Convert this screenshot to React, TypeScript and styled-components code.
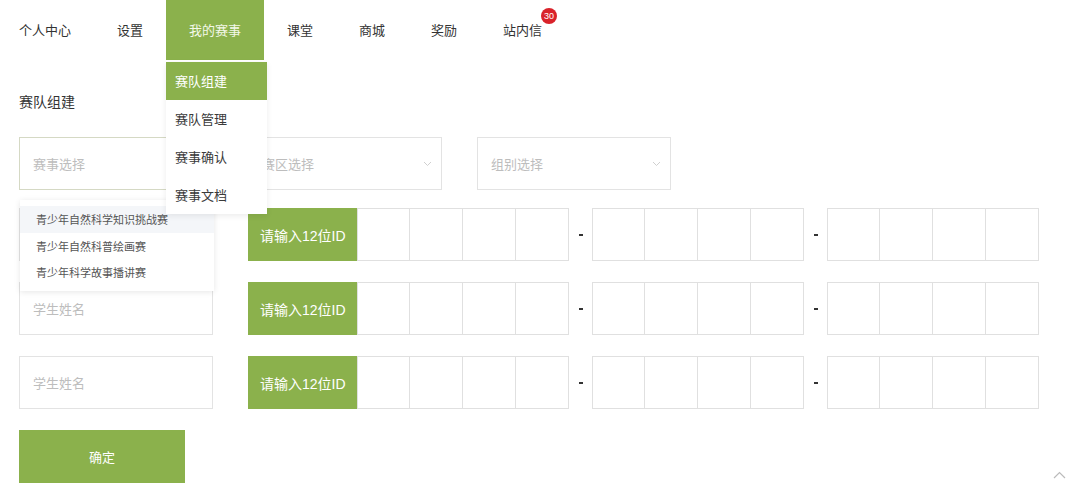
import React from "react";
import styled, { createGlobalStyle } from "styled-components";

const green = "#8bb14c";

const GlobalStyle = createGlobalStyle`
    html, body {
        margin: 0;
        padding: 0;
        background: #fff;
    }
    body {
        font-family: "Noto Sans CJK SC", "Noto Sans", sans-serif;
        color: #333;
    }
`;

const Page = styled.div`
    position: relative;
    width: 1080px;
    height: 501px;
    overflow: hidden;
`;

// Top navigation
const NavBar = styled.nav`
    display: flex;
    height: 60px;
`;

const NavItem = styled.div<{ $active?: boolean }>`
    position: relative;
    padding: 0 23px;
    line-height: 60px;
    font-size: 13px;
    white-space: nowrap;
    color: ${(p) => (p.$active ? "#f3f8e8" : "#333")};
    background: ${(p) => (p.$active ? green : "transparent")};

    &:first-child {
        padding-left: 19px;
    }
`;

const Badge = styled.span`
    position: absolute;
    right: 8px;
    top: 8px;
    width: 16px;
    height: 16px;
    border-radius: 50%;
    background: #d9222a;
    color: #fff;
    font-family: "Liberation Sans", sans-serif;
    font-size: 9px;
    line-height: 16px;
    text-align: center;
`;

const SubMenu = styled.div`
    position: absolute;
    top: 62px;
    left: 0;
    width: 101px;
    background: #fff;
    box-shadow: 0 2px 6px rgba(0, 0, 0, 0.08);
    z-index: 10;
`;

const SubItem = styled.div<{ $active?: boolean }>`
    height: 38px;
    line-height: 38px;
    padding-left: 9px;
    font-size: 13px;
    color: ${(p) => (p.$active ? "#fff" : "#3a3a3a")};
    background: ${(p) => (p.$active ? green : "transparent")};
`;

// Main content
const Main = styled.main`
    padding-left: 19px;
`;

const Title = styled.h2`
    margin: 32px 0 0;
    font-size: 14px;
    font-weight: normal;
    line-height: 18px;
    color: #333;
`;

const SelectRow = styled.div`
    display: flex;
    gap: 35px;
    margin-top: 27px;
`;

const SelectBox = styled.div<{ $focused?: boolean }>`
    position: relative;
    box-sizing: border-box;
    width: 194px;
    height: 53px;
    display: flex;
    align-items: center;
    justify-content: space-between;
    padding: 0 9px 0 13px;
    border: 1px solid ${(p) => (p.$focused ? "#d5d9c4" : "#e3e3e3")};
    font-size: 13px;
    color: #bdbdbd;
`;

const Chevron = styled.svg`
    width: 9px;
    height: 6px;
`;

const OptionsPanel = styled.div`
    position: absolute;
    top: 62px;
    left: 0;
    width: 194px;
    padding: 6px 0 5px;
    background: #fff;
    box-shadow: 0 1px 6px rgba(0, 0, 0, 0.1);
    z-index: 5;
`;

const OptionItem = styled.div<{ $hover?: boolean }>`
    height: 26.5px;
    line-height: 26.5px;
    padding-left: 16px;
    font-size: 11px;
    color: #555;
    background: ${(p) => (p.$hover ? "#f4f6f9" : "transparent")};
`;

const Rows = styled.div`
    display: flex;
    flex-direction: column;
    gap: 21px;
    margin-top: 18px;
`;

const Row = styled.div`
    display: flex;
    align-items: stretch;
    height: 53px;
`;

const NameInput = styled.div`
    box-sizing: border-box;
    width: 194px;
    margin-right: 35px;
    display: flex;
    align-items: center;
    padding-left: 13px;
    border: 1px solid #e3e3e3;
    font-size: 13px;
    color: #bdbdbd;
`;

const IdLabel = styled.div`
    width: 109px;
    display: flex;
    align-items: center;
    padding-left: 12px;
    box-sizing: border-box;
    background: ${green};
    color: #fff;
    font-family: "Liberation Sans", "Noto Sans CJK SC", sans-serif;
    font-size: 14px;
`;

const CellGroup = styled.div`
    display: flex;
`;

const Cell = styled.div`
    box-sizing: border-box;
    width: 53px;
    border: 1px solid #e0e0e0;

    & + & {
        margin-left: -1px;
        width: 54px;
    }
`;

const Dash = styled.div`
    width: 23px;
    display: flex;
    align-items: center;
    justify-content: center;

    &::before {
        content: "";
        width: 4px;
        height: 2px;
        background: #333;
    }
`;

const ConfirmButton = styled.button`
    display: block;
    margin-top: 21px;
    width: 166px;
    height: 53px;
    border: none;
    background: ${green};
    color: #fff;
    font-family: "Noto Sans CJK SC", sans-serif;
    font-size: 13px;
    cursor: pointer;
`;

const ScrollTop = styled.svg`
    position: absolute;
    right: 14px;
    bottom: 22px;
    width: 13px;
    height: 8px;
`;

const navItems = ["个人中心", "设置", "我的赛事", "课堂", "商城", "奖励", "站内信"];
const subItems = ["赛队组建", "赛队管理", "赛事确认", "赛事文档"];
const options = ["青少年自然科学知识挑战赛", "青少年自然科普绘画赛", "青少年科学故事播讲赛"];

function DownArrow() {
    return (
        <Chevron viewBox="0 0 9 6">
            <polyline points="1,1 4.5,4.5 8,1" fill="none" stroke="#d0d0d0" strokeWidth="1" />
        </Chevron>
    );
}

function IdRow() {
    return (
        <Row>
            <NameInput>学生姓名</NameInput>
            <IdLabel>请输入12位ID</IdLabel>
            {[0, 1, 2].map((g) => (
                <React.Fragment key={g}>
                    {g > 0 && <Dash />}
                    <CellGroup>
                        {[0, 1, 2, 3].map((c) => (
                            <Cell key={c} />
                        ))}
                    </CellGroup>
                </React.Fragment>
            ))}
        </Row>
    );
}

export default function App() {
    return (
        <Page>
            <GlobalStyle />
            <NavBar>
                {navItems.map((item) => (
                    <NavItem key={item} $active={item === "我的赛事"}>
                        {item}
                        {item === "站内信" && <Badge>30</Badge>}
                        {item === "我的赛事" && (
                            <SubMenu>
                                {subItems.map((s, i) => (
                                    <SubItem key={s} $active={i === 0}>
                                        {s}
                                    </SubItem>
                                ))}
                            </SubMenu>
                        )}
                    </NavItem>
                ))}
            </NavBar>

            <Main>
                <Title>赛队组建</Title>
                <SelectRow>
                    <SelectBox $focused>
                        赛事选择
                        <OptionsPanel>
                            {options.map((o, i) => (
                                <OptionItem key={o} $hover={i === 0}>
                                    {o}
                                </OptionItem>
                            ))}
                        </OptionsPanel>
                    </SelectBox>
                    <SelectBox>
                        赛区选择
                        <DownArrow />
                    </SelectBox>
                    <SelectBox>
                        组别选择
                        <DownArrow />
                    </SelectBox>
                </SelectRow>

                <Rows>
                    <IdRow />
                    <IdRow />
                    <IdRow />
                </Rows>

                <ConfirmButton>确定</ConfirmButton>
            </Main>

            <ScrollTop viewBox="0 0 13 8">
                <polyline points="1,7 6.5,1.5 12,7" fill="none" stroke="#bbb" strokeWidth="1.2" />
            </ScrollTop>
        </Page>
    );
}
